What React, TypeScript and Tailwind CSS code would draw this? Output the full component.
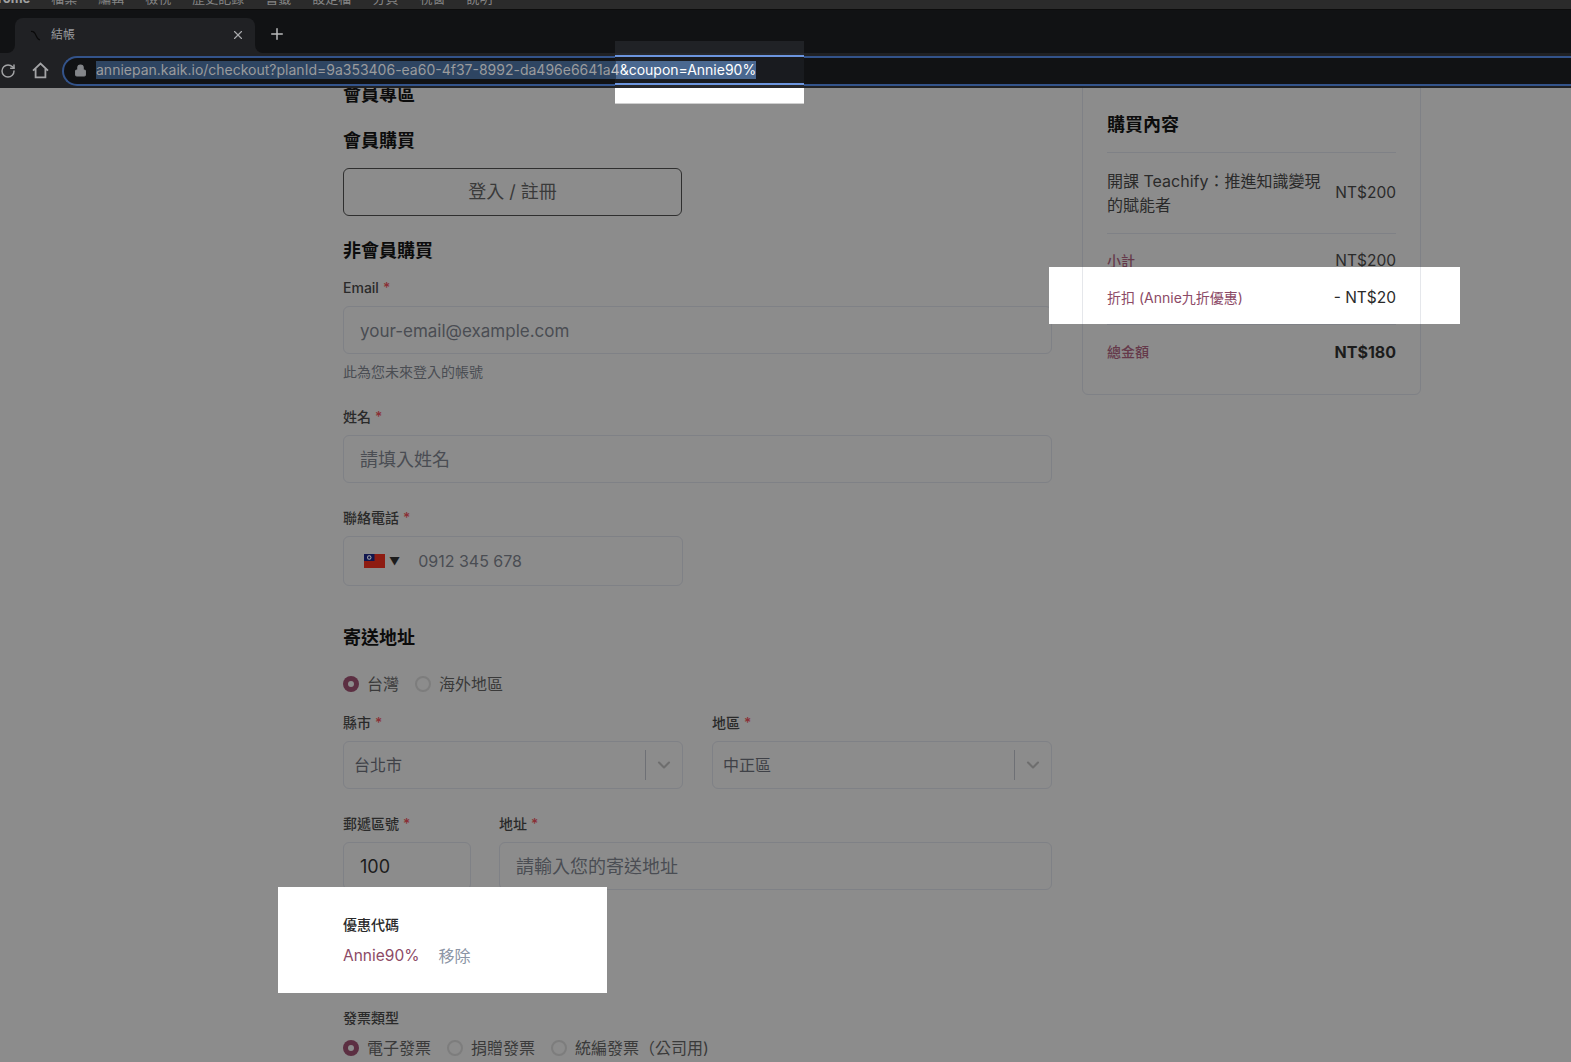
import { ChevronDown, Lock, Plus, RotateCw, X } from 'lucide-react';

const sans = 'font-["Inter","Noto_Sans_CJK_TC",sans-serif]';

function Label({ text, required = true }: { text: string; required?: boolean }) {
  return (
    <div className="h-[20px] text-sm leading-5 font-medium text-[#2a2a2a]">
      {text}
      {required && <span className="ml-1 text-[#8a2f35]">*</span>}
    </div>
  );
}

function Input({ placeholder, value, small }: { placeholder?: string; value?: string; small?: boolean }) {
  return (
    <div className={`flex h-[48px] items-center rounded-md border border-[#7f8186] px-4 ${small ? 'pt-[3px] text-[17px]' : 'pt-[2px] text-lg'}`}>
      {value ? <span className="text-[#1c1c1c]">{value}</span> : <span className="text-[#4a4d53]">{placeholder}</span>}
    </div>
  );
}

function Select({ value }: { value: string }) {
  return (
    <div className="flex h-[48px] items-center rounded-md border border-[#7f8186] pl-[10px] text-base text-[#3f4147]">
      <span className="flex-1">{value}</span>
      <span className="h-[30px] w-px bg-[#6e7075]" />
      <span className="flex w-[36px] justify-center">
        <ChevronDown className="h-5 w-5 text-[#6e6e6e]" strokeWidth={2.5} />
      </span>
    </div>
  );
}

function Radio({ label, checked = false }: { label: string; checked?: boolean }) {
  return (
    <div className="flex items-center gap-2 text-base text-[#3a3a3a]">
      {checked ? (
        <span className="flex h-4 w-4 items-center justify-center rounded-full bg-[#5c2f42]">
          <span className="h-[6px] w-[6px] rounded-full bg-[#8c8c8c]" />
        </span>
      ) : (
        <span className="h-4 w-4 rounded-full border-2 border-[#7d7d7d]" />
      )}
      {label}
    </div>
  );
}

function Flag() {
  return (
    <svg width="21" height="14" viewBox="0 0 21 14">
      <rect width="21" height="14" fill="#8e1c12" />
      <rect width="10.5" height="7" fill="#11164f" />
      <circle cx="5.25" cy="3.5" r="2.2" fill="#a8a8a8" />
      <circle cx="5.25" cy="3.5" r="1.2" fill="#11164f" />
    </svg>
  );
}

function HomeIcon() {
  return (
    <svg className="ml-[16px] shrink-0" width="17" height="17" viewBox="0 0 17 17" fill="none" stroke="#a3a4a6" strokeWidth="1.8">
      <path d="M1 8.6 8.5 1.6 16 8.6M3.6 6.8V15.4H13.4V6.8" strokeLinejoin="miter" />
    </svg>
  );
}

function TabIcon() {
  return (
    <svg className="absolute top-[12px] left-[15px]" width="11" height="11" viewBox="0 0 11 11" fill="none" stroke="#0a0a0a" strokeWidth="1.2">
      <path d="M1 1.5C4 1 5 3 6 5.5S8 9.5 10 10" />
    </svg>
  );
}

function BrowserChrome() {
  const menu = ['檔案', '編輯', '檢視', '歷史記錄', '書籤', '設定檔', '分頁', '視窗', '說明'];
  return (
    <header className="relative shrink-0">
      <div className="flex h-[10px] items-end gap-[21px] overflow-hidden border-b border-[#0d0d0d] bg-[#2b2b2b] text-[13px] leading-[16px] text-[#858585]">
        <span className="mb-[3px] -ml-[20px] font-bold text-[#a0a0a0]">Chrome</span>
        {menu.map((m) => (
          <span key={m} className="mb-[3px]">
            {m}
          </span>
        ))}
      </div>
      <div className="flex h-[43px] items-end bg-[#111214]">
        <div className="h-[8px] w-[15px] bg-[#202124]">
          <div className="h-full rounded-br-lg bg-[#111214]" />
        </div>
        <div className="relative flex h-[35px] w-[240px] items-center rounded-t-lg bg-[#202124] pr-[10px] pb-[2px] pl-[36px] text-xs text-[#9a9c9f]">
          <TabIcon />
          <span className="flex-1">結帳</span>
          <X className="h-[14px] w-[14px] text-[#a8a9ab]" />
        </div>
        <div className="h-[8px] w-[8px] bg-[#202124]">
          <div className="h-full rounded-bl-lg bg-[#111214]" />
        </div>
        <Plus className="mb-[10px] ml-[5px] h-[18px] w-[18px] text-[#b9babb]" />
      </div>
      <div className="flex h-[35px] items-center bg-[#202124]">
        <RotateCw className="h-[16px] w-[16px] text-[#a3a4a6]" strokeWidth={2.2} />
        <HomeIcon />
        <div className="relative ml-[13px] flex h-[30px] flex-1 items-center rounded-l-full border-2 border-r-0 border-[#33538a] bg-[#111214] pl-[10px]">
          <Lock className="h-[13px] w-[13px] fill-[#84868a] text-[#84868a]" />
          <div className="relative z-10 -mt-[2px] ml-[9px] flex h-[18px] items-center text-sm leading-[18px] whitespace-nowrap">
            <span className="bg-[#2e4562] text-[#9a9b9d]">anniepan.kaik.io/checkout?planId=9a353406-ea60-4f37-8992-da496e6641a</span>
            <span className="bg-[linear-gradient(90deg,#2e4562_55%,#4a6890_55%)] text-[#c4c6c9]">4</span>
            <span className="bg-[#4a6890] text-white">&amp;coupon=Annie90%</span>
          </div>
        </div>
      </div>
      <div className="absolute top-[41px] left-[615px] flex h-[63px] w-[189px] flex-col">
        <div className="h-[12px] bg-[#202226]" />
        <div className="flex h-[35px] flex-col bg-[#26282c] pt-[2px]">
          <div className="h-[30px] border-y-2 border-[#6c95de] bg-[#191b1f]" />
        </div>
        <div className="flex-1 border-b border-[#cfcfcf] bg-white" />
      </div>
    </header>
  );
}

function Highlights() {
  return (
    <>
      <div className="absolute top-[267px] left-[1049px] h-[57px] w-[411px] bg-white pr-[39px] pl-[33px]">
        <div className="flex h-full items-center justify-between border-x border-[#e5e7eb] px-6 pt-[5px]">
          <span className="text-sm text-[#8c4a66]">折扣 (Annie九折優惠)</span>
          <span className="text-[15.5px] text-[#2a2a2a]">- NT$20</span>
        </div>
      </div>
      <div className="absolute top-[887px] left-[278px] h-[106px] w-[329px] bg-white px-[65px] pt-[28px]">
        <div className="h-[20px] text-sm leading-5 font-medium text-[#2a2a2a]">優惠代碼</div>
        <div className="mt-[11px] flex gap-5 text-base leading-5">
          <span className="text-[15.5px] text-[#8c4a66]">Annie90%</span>
          <span className="-ml-[1px] text-[#8b95a5]">移除</span>
        </div>
      </div>
    </>
  );
}

export default function App() {
  return (
    <div className={`relative flex h-[1062px] flex-col overflow-hidden bg-[#8c8c8c] ${sans}`}>
      <BrowserChrome />
      <main className="flex flex-1 items-start overflow-hidden pl-[343px]">
        <form className="-mt-[7px] w-[709px]">
          <h2 className="text-lg leading-7 font-bold text-[#0c0c0c]">會員專區</h2>
          <h3 className="mt-[18px] text-lg leading-7 font-bold text-[#0c0c0c]">會員購買</h3>
          <button
            type="button"
            className="mt-[13px] h-[48px] w-[339px] rounded-md border border-[#2f2f2f] text-lg text-[#3a3a3a]"
          >
            登入 / 註冊
          </button>
          <h3 className="mt-[21px] text-lg leading-7 font-bold text-[#0c0c0c]">非會員購買</h3>

          <div className="mt-[13px]">
            <Label text="Email" />
          </div>
          <div className="mt-[8px]">
            <Input placeholder="your-email@example.com" small />
          </div>
          <p className="mt-[8px] text-sm leading-5 text-[#4a4d53]">此為您未來登入的帳號</p>

          <div className="mt-[25px]">
            <Label text="姓名" />
          </div>
          <div className="mt-[8px]">
            <Input placeholder="請填入姓名" />
          </div>

          <div className="mt-[25px]">
            <Label text="聯絡電話" />
          </div>
          <div className="mt-[8px] flex h-[50px] w-[340px] items-center rounded-md border border-[#7f8186] pl-[20px] text-base text-[#4a4d53]">
            <Flag />
            <span className="ml-[4px] text-[11px] text-[#1c1c1c]">▼</span>
            <span className="ml-[18px]">0912 345 678</span>
          </div>

          <h3 className="mt-[38px] text-lg leading-7 font-bold text-[#0c0c0c]">寄送地址</h3>
          <div className="mt-[20px] flex h-[24px] gap-[16px]">
            <Radio label="台灣" checked />
            <Radio label="海外地區" />
          </div>

          <div className="mt-[17px] grid grid-cols-2 gap-x-[29px]">
            <div>
              <Label text="縣市" />
              <div className="mt-[8px]">
                <Select value="台北市" />
              </div>
            </div>
            <div>
              <Label text="地區" />
              <div className="mt-[8px]">
                <Select value="中正區" />
              </div>
            </div>
          </div>

          <div className="mt-[25px] grid grid-cols-[128px_1fr] gap-x-[28px]">
            <div>
              <Label text="郵遞區號" />
              <div className="mt-[8px]">
                <Input value="100" />
              </div>
            </div>
            <div>
              <Label text="地址" />
              <div className="mt-[8px]">
                <Input placeholder="請輸入您的寄送地址" />
              </div>
            </div>
          </div>

          <div className="mt-[118px]">
            <Label text="發票類型" required={false} />
          </div>
          <div className="mt-[8px] flex h-[24px] gap-[16px]">
            <Radio label="電子發票" checked />
            <Radio label="捐贈發票" />
            <Radio label="統編發票（公司用)" />
          </div>
        </form>

        <aside className="-mt-[1px] ml-[30px] h-[308px] w-[339px] rounded-b-md border border-[#7f8186] px-6 pt-[23px]">
          <h3 className="text-lg leading-7 font-bold text-[#0c0c0c]">購買內容</h3>
          <div className="mt-[13px] flex items-center justify-between border-t border-[#7f8186] py-[16px] text-base leading-6 text-[#2a2a2a]">
            <span className="w-[216px]">開課 Teachify：推進知識變現的賦能者</span>
            <span className="text-[15.5px]">NT$200</span>
          </div>
          <div className="flex items-center justify-between border-t border-[#7f8186] pt-[15px] leading-6">
            <span className="text-sm font-medium text-[#65394a]">小計</span>
            <span className="text-[15.5px] text-[#2a2a2a]">NT$200</span>
          </div>
          <div className="mt-[51px] flex items-center justify-between border-t border-[#7f8186] pt-[15px] leading-6">
            <span className="text-sm font-medium text-[#65394a]">總金額</span>
            <span className="text-base font-bold text-[#1c1c1c]">NT$180</span>
          </div>
        </aside>
      </main>
      <Highlights />
    </div>
  );
}
